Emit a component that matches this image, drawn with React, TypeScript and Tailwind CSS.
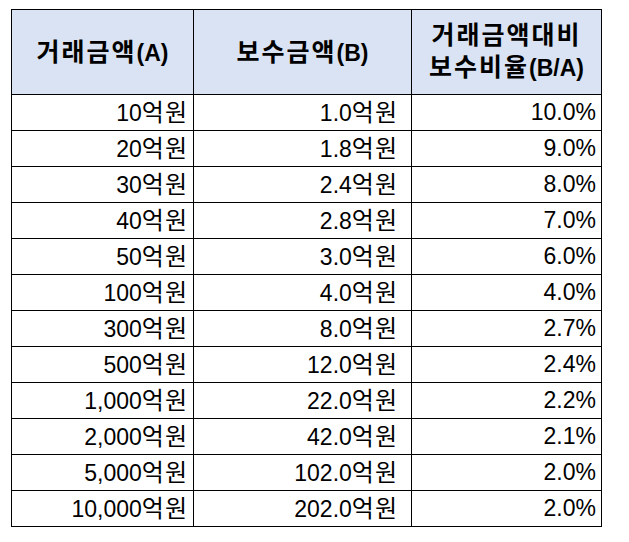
const rows: [string, string, string][] = [
  ["10", "1.0", "10.0%"],
  ["20", "1.8", "9.0%"],
  ["30", "2.4", "8.0%"],
  ["40", "2.8", "7.0%"],
  ["50", "3.0", "6.0%"],
  ["100", "4.0", "4.0%"],
  ["300", "8.0", "2.7%"],
  ["500", "12.0", "2.4%"],
  ["1,000", "22.0", "2.2%"],
  ["2,000", "42.0", "2.1%"],
  ["5,000", "102.0", "2.0%"],
  ["10,000", "202.0", "2.0%"],
];

function Won({ n }: { n: string }) {
  return (
    <>
      {n}
      <span className="text-[24px] tracking-[1px]">억원</span>
    </>
  );
}

export default function App() {
  return (
    <div
      className="min-h-[542px] bg-white pl-[11px] pt-[9px] text-black"
      style={{ fontFamily: '"Liberation Sans", "Noto Sans CJK KR", sans-serif' }}
    >
      <table className="border-collapse text-[23px] leading-none">
        <thead>
          <tr className="bg-[#dae3f3]">
            <th className="h-[85px] w-[182px] border border-black text-center text-[23px] font-bold">
              <span className="text-[25px] tracking-[2px]">거래금액</span>(A)
            </th>
            <th className="w-[218px] border border-black text-center text-[23px] font-bold">
              <span className="text-[25px] tracking-[2px]">보수금액</span>(B)
            </th>
            <th className="w-[190px] border border-black text-center text-[23px] font-bold leading-[31px]">
              <span className="text-[25px] tracking-[2px]">거래금액대비</span>
              <br />
              <span className="text-[25px] tracking-[2px]">보수비율</span>(B/A)
            </th>
          </tr>
        </thead>
        <tbody>
          {rows.map(([a, b, c]) => (
            <tr key={a}>
              <td className="h-[36px] border border-black pr-[5px] text-right">
                <Won n={a} />
              </td>
              <td className="border border-black pr-[13px] text-right">
                <Won n={b} />
              </td>
              <td className="border border-black pr-[5px] text-right">{c}</td>
            </tr>
          ))}
        </tbody>
      </table>
    </div>
  );
}
